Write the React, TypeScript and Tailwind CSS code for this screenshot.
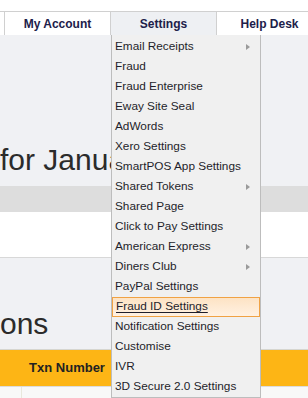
const menuItems: { label: string; sub?: boolean; active?: boolean }[] = [
  { label: "Email Receipts", sub: true },
  { label: "Fraud" },
  { label: "Fraud Enterprise" },
  { label: "Eway Site Seal" },
  { label: "AdWords" },
  { label: "Xero Settings" },
  { label: "SmartPOS App Settings" },
  { label: "Shared Tokens", sub: true },
  { label: "Shared Page" },
  { label: "Click to Pay Settings" },
  { label: "American Express", sub: true },
  { label: "Diners Club", sub: true },
  { label: "PayPal Settings" },
  { label: "Fraud ID Settings", active: true },
  { label: "Notification Settings" },
  { label: "Customise" },
  { label: "IVR" },
  { label: "3D Secure 2.0 Settings" },
]

function NavTab({ label, active }: { label: string; active?: boolean }) {
  return (
    <div
      className={
        "w-[106px] shrink-0 h-full flex items-center justify-center border-l border-[#d0d0d0] text-[12px] font-bold text-[#20204a] " +
        (active ? "bg-[#eef0f3]" : "bg-white")
      }
    >
      {label}
    </div>
  )
}

function SettingsMenu() {
  return (
    <div className="absolute left-[111px] top-[35px] w-[150px] bg-[#f0f0f0] border-l border-r border-b border-[#bdbdbd] pt-[2px]">
      {menuItems.map((item) => (
        <div
          key={item.label}
          className={
            "h-[20px] flex items-center pl-[3px] pr-[10px] text-[11.8px] text-[#1e1e2a] whitespace-nowrap " +
            (item.active
              ? "bg-gradient-to-b from-[#fde3c4] to-[#fff1e2] border border-[#f0a244] pl-[2px]"
              : "")
          }
        >
          <span className={item.active ? "underline underline-offset-2" : ""}>{item.label}</span>
          {item.sub && (
            <span className="ml-auto w-0 h-0 border-y-[3px] border-y-transparent border-l-[4px] border-l-[#9a9a9a]" />
          )}
        </div>
      ))}
    </div>
  )
}

export default function App() {
  return (
    <div className="relative w-[308px] h-[398px] overflow-hidden bg-[#f0f1f4] font-['Liberation_Sans',Arial,sans-serif]">
      <div className="h-[11px] bg-white" />
      <div className="h-[24px] flex bg-white border-t border-[#d0d0d0]">
        <div className="w-[4px] shrink-0" />
        <NavTab label="My Account" />
        <NavTab label="Settings" active />
        <NavTab label="Help Desk" />
      </div>

      <div className="pt-[107px] pb-[8px]">
        <h1 className="h-[36px] leading-[36px] text-[30px] text-[#2b2b2b] whitespace-nowrap">for January</h1>
      </div>
      <div className="h-[26px] bg-[#dddddd]" />
      <div className="h-[46px] bg-white border-b border-[#d8d8d8]" />

      <div className="pt-[48px] pb-[7px]">
        <h2 className="h-[36px] leading-[36px] text-[30px] text-[#2b2b2b] whitespace-nowrap">ons</h2>
      </div>
      <div className="border-t border-[#d6d6d0] h-[37px] bg-[#fdb515] flex">
        <div className="w-[22px] shrink-0" />
        <div className="w-[90px] shrink-0 flex items-center justify-center text-[13px] font-bold text-[#222]">
          Txn Number
        </div>
      </div>
      <div className="flex h-[20px] bg-[#f8f8f8] border-t border-[#dcdcdc]">
        <div className="w-[22px] shrink-0 border-r border-[#e8e8dc]" />
        <div className="w-[180px] shrink-0 border-r border-[#e8e8dc]" />
      </div>

      <SettingsMenu />
    </div>
  )
}
